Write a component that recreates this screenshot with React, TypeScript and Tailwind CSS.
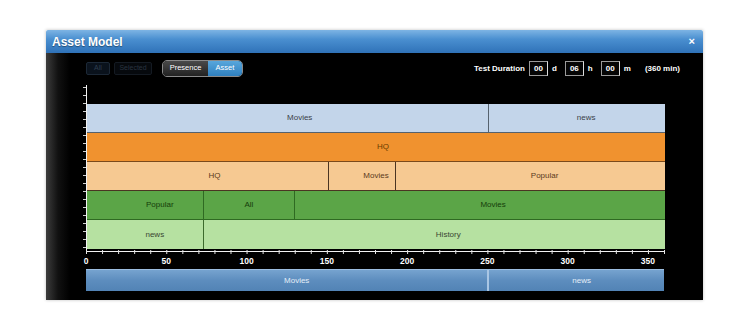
type Seg = { label: string; span: number; pad: string };
type Row = { bg: string; text: string; line: string; segs: Seg[] };

const TOTAL = 360;

const ROWS: Row[] = [
  {
    bg: "bg-[#c3d5ea]",
    text: "text-[#3a3f48]",
    line: "border-[#56626e]",
    segs: [
      { label: "Movies", span: 250, pad: "pl-[24px]" },
      { label: "news", span: 110, pad: "pl-[18px]" },
    ],
  },
  {
    bg: "bg-[#f0922f]",
    text: "text-[#6a3d00]",
    line: "border-[#7a4a1c]",
    segs: [{ label: "HQ", span: 360, pad: "pl-[14px]" }],
  },
  {
    bg: "bg-[#f6c992]",
    text: "text-[#5a3a1c]",
    line: "border-[#4a3422]",
    segs: [
      { label: "HQ", span: 150, pad: "pl-[14px]" },
      { label: "Movies", span: 42, pad: "pl-[28px]" },
      { label: "Popular", span: 168, pad: "pl-[28px]" },
    ],
  },
  {
    bg: "bg-[#5ba547]",
    text: "text-[#153d0a]",
    line: "border-[#2f6a22]",
    segs: [
      { label: "Popular", span: 72, pad: "pl-[30px]" },
      { label: "All", span: 57, pad: "pl-0" },
      { label: "Movies", span: 231, pad: "pl-[26px]" },
    ],
  },
  {
    bg: "bg-[#b6e1a1]",
    text: "text-[#3a4632]",
    line: "border-[#3c6a2c]",
    segs: [
      { label: "news", span: 72, pad: "pl-[20px]" },
      { label: "History", span: 288, pad: "pl-[28px]" },
    ],
  },
];

const BOTTOM: Seg[] = [
  { label: "Movies", span: 250, pad: "pl-[20px]" },
  { label: "news", span: 110, pad: "pl-[10px]" },
];

const PX = 578 / TOTAL;

function DurationBox({ value }: { value: string }) {
  return (
    <div className="w-[19px] h-[15px] border border-[#9a9a9a] border-r-[#dcdcdc] bg-[#050505] flex items-center justify-center text-white text-[8px]">
      {value}
    </div>
  );
}

function YAxis() {
  const ticks = Array.from({ length: 21 }, (_, i) => i * 8 + 2);
  return (
    <svg width="6" height="165" className="block">
      <line x1="5.5" y1="0" x2="5.5" y2="165" stroke="#f2f2f2" strokeWidth="1" />
      {ticks.map((y) => (
        <line key={y} x1="2" y1={y + 0.5} x2="5" y2={y + 0.5} stroke="#d0d0d0" strokeWidth="1" />
      ))}
    </svg>
  );
}

function XAxis() {
  const minor = Array.from({ length: 37 }, (_, i) => i * 10);
  const major = [0, 50, 100, 150, 200, 250, 300, 350];
  return (
    <svg width="600" height="18" className="block -ml-[6px]">
      <line x1="6" y1="1.5" x2={6 + 578} y2="1.5" stroke="#f2f2f2" strokeWidth="1" />
      {minor.map((v) => (
        <line
          key={v}
          x1={6 + v * PX + 0.5}
          y1="0"
          x2={6 + v * PX + 0.5}
          y2="4"
          stroke="#e6e6e6"
          strokeWidth="1"
        />
      ))}
      {major.map((v) => (
        <text
          key={v}
          x={6 + v * PX}
          y="14"
          textAnchor="middle"
          fill="#ffffff"
          fontSize="8.5"
          fontWeight="700"
          fontFamily="'Liberation Sans', Arial, sans-serif"
        >
          {v}
        </text>
      ))}
    </svg>
  );
}

export default function App() {
  return (
    <div className="w-[750px] h-[330px] bg-white pt-[30px] pl-[46px] font-['Liberation_Sans',Arial,sans-serif]">
      <div className="w-[657px] h-[270px] flex flex-col shadow-[0_0_3px_rgba(0,0,0,0.25)]">
        <div className="h-[23px] flex items-center justify-between px-[6px] bg-[linear-gradient(to_bottom,#7db4e4,#4a8fd0_40%,#2f72b8)] rounded-t-[2px]">
          <span className="text-white font-bold text-[12px] [text-shadow:0_1px_1px_rgba(0,0,0,0.4)]">
            Asset Model
          </span>
          <span className="text-white font-bold text-[11px] leading-none mr-[2px]">×</span>
        </div>

        <div className="flex-1 flex flex-col pl-[40px] bg-[linear-gradient(to_right,#3c3c3c,#111_12px,#000_24px)]">
          <div className="mt-[6px] h-[18px] w-[594px] flex items-center">
            <div className="flex items-center gap-[4px]">
              <div className="h-[13px] w-[24px] rounded-[2px] border border-[#1c2836] bg-[#0a121c] text-[#2e3e50] text-[7px] flex items-center justify-center">
                All
              </div>
              <div className="h-[13px] w-[38px] rounded-[2px] border border-[#141a22] bg-[#06090d] text-[#2a3440] text-[7px] flex items-center justify-center">
                Selected
              </div>
            </div>
            <div className="ml-[10px] h-[17px] w-[81px] rounded-[5px] border border-[#8a8a8a] flex overflow-hidden text-[7.5px] text-white">
              <div className="w-[45px] flex items-center justify-center bg-[linear-gradient(to_bottom,#4a4a4a,#222)]">
                Presence
              </div>
              <div className="flex-1 flex items-center justify-center bg-[linear-gradient(to_bottom,#58a6dc,#2f80bf)]">
                Asset
              </div>
            </div>
            <div className="ml-auto flex items-center text-white text-[8px] font-bold mt-[1px]">
              <span className="mr-[4px]">Test Duration</span>
              <DurationBox value="00" />
              <span className="ml-[4px] mr-[8px]">d</span>
              <DurationBox value="06" />
              <span className="ml-[4px] mr-[8px]">h</span>
              <DurationBox value="00" />
              <span className="ml-[4px]">m</span>
              <span className="ml-[14px]">(360 min)</span>
            </div>
          </div>

          <div className="mt-[8px] flex -ml-[5px]">
            <YAxis />
            <div className="flex flex-col w-[578px] pt-[19px]">
              {ROWS.map((row, ri) => (
                <div
                  key={ri}
                  className={`h-[29px] flex ${row.bg} border-b ${row.line} ${ri === 4 ? "border-b-0" : ""}`}
                >
                  {row.segs.map((s, si) => (
                    <div
                      key={si}
                      style={{ width: s.span * PX }}
                      className={`h-full flex items-center justify-center text-[8px] ${row.text} ${s.pad} ${si > 0 ? `border-l ${row.line}` : ""}`}
                    >
                      {s.label}
                    </div>
                  ))}
                </div>
              ))}
            </div>
          </div>

          <XAxis />

          <div className="mt-[1px] w-[578px] h-[22px] flex bg-[linear-gradient(to_bottom,#76a3cf,#5d8dbe_50%,#5283b5)] border-t border-[#9cbde0]">
            {BOTTOM.map((s, si) => (
              <div
                key={si}
                style={{ width: s.span * PX }}
                className={`h-full flex items-center justify-center text-[8px] text-[#e4eef8] ${s.pad} ${si > 0 ? "border-l-2 border-[#a9c6e4]" : ""}`}
              >
                {s.label}
              </div>
            ))}
          </div>
        </div>
      </div>
    </div>
  );
}
